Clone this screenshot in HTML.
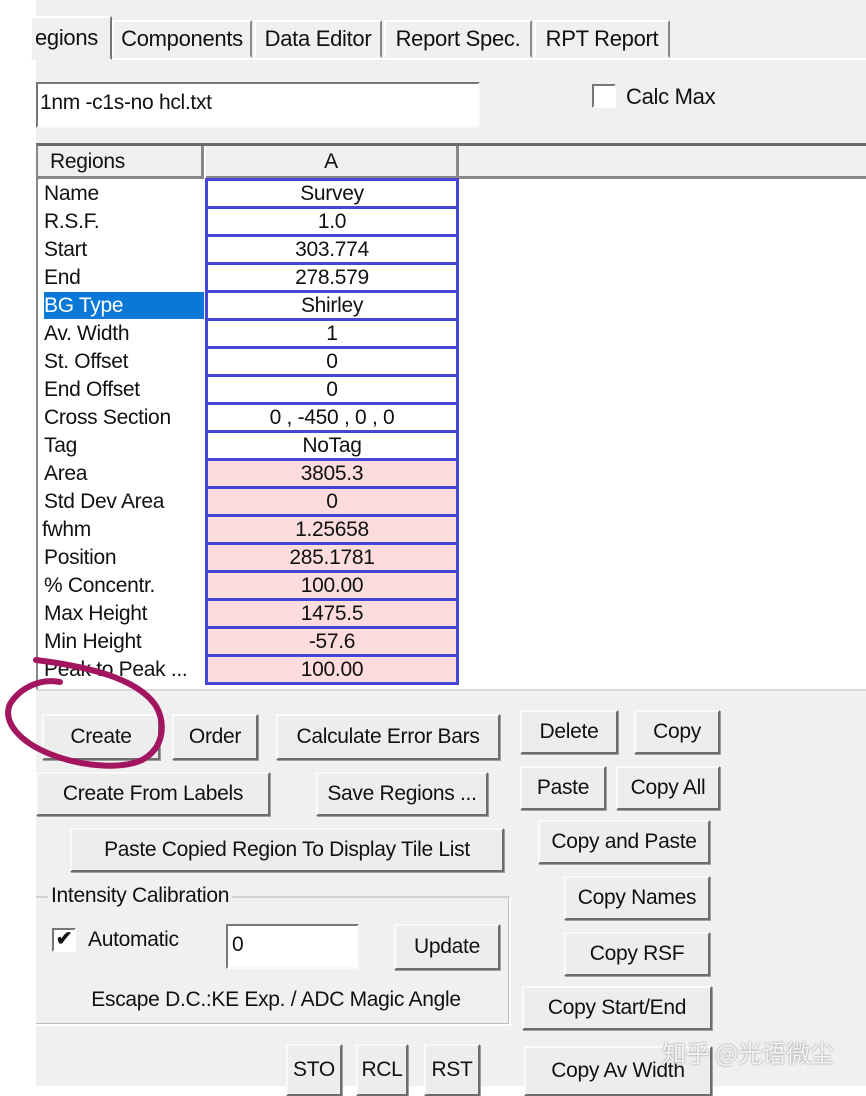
<!DOCTYPE html><html><head><meta charset="utf-8"><style>
*{box-sizing:border-box;margin:0;padding:0}
body{width:866px;height:1086px;background:#fff;position:relative;overflow:hidden;font-family:"Liberation Sans",sans-serif;font-size:21px;letter-spacing:-0.3px;color:#111}
.a{position:absolute}
.bg{position:absolute;left:36px;top:0;width:830px;height:1086px;background:#f0f0f0}
.btn{position:absolute;background:#ededed;border:2px solid;border-color:#fafafa #6d6d6d #6d6d6d #fafafa;box-shadow:1px 1px 0 #a0a0a0;display:flex;align-items:center;justify-content:center;white-space:nowrap}
.tab{position:absolute;top:20px;height:38px;border:2px solid;border-color:#fff #888 transparent #fff;display:flex;align-items:center;justify-content:center;white-space:nowrap;background:#f0f0f0;font-size:22px}
.lbl{position:absolute;left:44px;height:28px;line-height:28px;white-space:nowrap}
.cell{position:absolute;left:205px;width:254px;height:31px;border:3px solid #4646d6;text-align:center;line-height:25px;background:#fff}
.pk{background:#fcdcdc}
</style></head><body>
<div class="bg"></div>
<div class="tab" style="left:30px;width:82px;top:16px;height:44px;border-right-color:#777;justify-content:flex-end;padding-right:12px">egions</div>
<div class="tab" style="left:112px;width:140px">Components</div>
<div class="tab" style="left:254px;width:128px">Data Editor</div>
<div class="tab" style="left:384px;width:148px">Report Spec.</div>
<div class="tab" style="left:534px;width:136px">RPT Report</div>
<div class="a" style="left:112px;top:58px;width:754px;height:2px;background:#fff"></div>
<div class="a" style="left:36px;top:82px;width:444px;height:46px;background:#fff;border:2px solid;border-color:#777 #f8f8f8 #f8f8f8 #777;padding-left:2px;line-height:38px">1nm -c1s-no hcl.txt</div>
<div class="a" style="left:592px;top:84px;width:24px;height:24px;background:#fff;border:2px solid;border-color:#777 #fff #fff #777"></div>
<div class="a" style="left:626px;top:84px;line-height:26px;font-size:22px">Calc Max</div>
<div class="a" style="left:36px;top:143px;width:830px;height:546px;background:#fff;border-top:3px solid #6a6a6a;border-left:2px solid #888"></div>
<div class="a" style="left:38px;top:146px;width:166px;height:33px;background:#f0f0f0;border-right:3px solid #888;border-bottom:3px solid #888;padding-left:12px;line-height:32px">Regions</div>
<div class="a" style="left:206px;top:146px;width:253px;height:33px;background:#f0f0f0;border-right:3px solid #888;border-bottom:3px solid #888;text-align:center;line-height:32px">A</div>
<div class="a" style="left:459px;top:146px;width:407px;height:33px;background:#f0f0f0;border-bottom:3px solid #888"></div>
<div class="a" style="left:44px;top:292px;width:160px;height:27px;background:#0a78d7"></div>
<div class="lbl" style="top:180px">Name</div><div class="lbl" style="top:208px">R.S.F.</div><div class="lbl" style="top:236px">Start</div><div class="lbl" style="top:264px">End</div>
<div class="lbl" style="top:292px;color:#fff">BG Type</div><div class="lbl" style="top:320px">Av. Width</div><div class="lbl" style="top:348px">St. Offset</div><div class="lbl" style="top:376px">End Offset</div>
<div class="lbl" style="top:404px">Cross Section</div><div class="lbl" style="top:432px">Tag</div><div class="lbl" style="top:460px">Area</div><div class="lbl" style="top:488px">Std Dev Area</div>
<div class="lbl" style="top:516px;left:42px">fwhm</div><div class="lbl" style="top:544px">Position</div><div class="lbl" style="top:572px">% Concentr.</div><div class="lbl" style="top:600px">Max Height</div>
<div class="lbl" style="top:628px">Min Height</div><div class="lbl" style="top:656px">Peak to Peak ...</div>
<div class="cell" style="top:178px">Survey</div><div class="cell" style="top:206px">1.0</div><div class="cell" style="top:234px">303.774</div><div class="cell" style="top:262px">278.579</div>
<div class="cell" style="top:290px">Shirley</div><div class="cell" style="top:318px">1</div><div class="cell" style="top:346px">0</div><div class="cell" style="top:374px">0</div>
<div class="cell" style="top:402px">0 , -450 , 0 , 0</div><div class="cell" style="top:430px">NoTag</div>
<div class="cell pk" style="top:458px">3805.3</div><div class="cell pk" style="top:486px">0</div><div class="cell pk" style="top:514px">1.25658</div><div class="cell pk" style="top:542px">285.1781</div>
<div class="cell pk" style="top:570px">100.00</div><div class="cell pk" style="top:598px">1475.5</div><div class="cell pk" style="top:626px">-57.6</div><div class="cell pk" style="top:654px">100.00</div>
<div class="a" style="left:36px;top:689px;width:830px;height:2px;background:#d8d8d8"></div>
<div class="btn" style="left:42px;top:714px;width:118px;height:46px">Create</div>
<div class="btn" style="left:172px;top:714px;width:86px;height:46px">Order</div>
<div class="btn" style="left:276px;top:714px;width:224px;height:46px">Calculate Error Bars</div>
<div class="btn" style="left:520px;top:710px;width:98px;height:44px">Delete</div>
<div class="btn" style="left:634px;top:710px;width:86px;height:44px">Copy</div>
<div class="btn" style="left:36px;top:772px;width:234px;height:44px">Create From Labels</div>
<div class="btn" style="left:316px;top:772px;width:172px;height:44px">Save Regions ...</div>
<div class="btn" style="left:520px;top:766px;width:86px;height:44px">Paste</div>
<div class="btn" style="left:616px;top:766px;width:104px;height:44px">Copy All</div>
<div class="btn" style="left:70px;top:828px;width:434px;height:44px">Paste Copied Region To Display Tile List</div>
<div class="btn" style="left:538px;top:820px;width:172px;height:44px">Copy and Paste</div>
<div class="btn" style="left:564px;top:876px;width:146px;height:44px">Copy Names</div>
<div class="btn" style="left:564px;top:932px;width:146px;height:44px">Copy RSF</div>
<div class="btn" style="left:522px;top:986px;width:190px;height:44px">Copy Start/End</div>
<div class="btn" style="left:524px;top:1046px;width:188px;height:50px">Copy Av Width</div>
<div class="a" style="left:36px;top:896px;width:475px;height:130px;border:2px solid;border-color:#d0d0d0 #fff #fff #d0d0d0;border-left:none;box-shadow:inset -1px -1px 0 #bbb"></div>
<div class="a" style="left:48px;top:882px;background:#f0f0f0;padding:0 3px;line-height:28px">Intensity Calibration</div>
<div class="a" style="left:52px;top:928px;width:24px;height:24px;background:#fff;border:2px solid;border-color:#777 #fff #fff #777;font-size:20px;line-height:18px;text-align:center;font-weight:bold">✔</div>
<div class="a" style="left:88px;top:926px;line-height:28px">Automatic</div>
<div class="a" style="left:226px;top:924px;width:133px;height:45px;background:#fff;border:2px solid;border-color:#777 #f8f8f8 #f8f8f8 #777;padding-left:4px;line-height:38px">0</div>
<div class="btn" style="left:394px;top:924px;width:106px;height:46px">Update</div>
<div class="a" style="left:36px;top:986px;width:480px;text-align:center;line-height:28px">Escape D.C.:KE Exp. / ADC Magic Angle</div>
<div class="btn" style="left:286px;top:1044px;width:56px;height:52px">STO</div>
<div class="btn" style="left:356px;top:1044px;width:52px;height:52px">RCL</div>
<div class="btn" style="left:424px;top:1044px;width:56px;height:52px">RST</div>
<svg class="a" style="left:0;top:0" width="866" height="1086"><path d="M60 682 C40 678 20 688 10 704 C2 722 20 742 50 754 C80 766 120 770 142 760 C164 748 166 724 156 706 C140 682 100 668 36 660" fill="none" stroke="#a3165f" stroke-width="6" stroke-linecap="round"/></svg>
<div class="a" style="left:662px;top:1034px;font-family:'Noto Sans CJK SC',sans-serif;font-size:24px;color:rgba(255,255,255,.85);text-shadow:0 0 2px #888;letter-spacing:0">知乎 @光语微尘</div>
</body></html>
